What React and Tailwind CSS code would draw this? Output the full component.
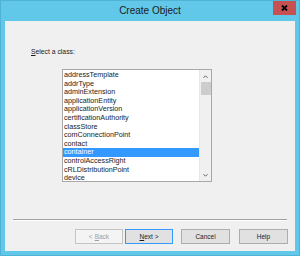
export default function App() {
  const items = [
    "addressTemplate",
    "addrType",
    "adminExtension",
    "applicationEntity",
    "applicationVersion",
    "certificationAuthority",
    "classStore",
    "comConnectionPoint",
    "contact",
    "container",
    "controlAccessRight",
    "cRLDistributionPoint",
    "device",
  ];
  const font = { fontFamily: '"Liberation Sans", Arial, sans-serif' };
  return (
    <div
      className="w-[300px] h-[256px] bg-[#62c8ea] flex flex-col border border-[#4fb3d6] overflow-hidden"
      style={font}
    >
      <div className="h-[20px] grid grid-cols-[1fr_auto_1fr] items-start">
        <div />
        <div className="text-[10px] leading-[12px] text-[#1b1b1b] mt-[4px]">Create Object</div>
        <div className="flex justify-end pr-[3px]">
          <div className="w-[23px] h-[14px] bg-[#c75050] flex items-center justify-center">
            <svg width="7" height="6" viewBox="0 0 7 6">
              <path d="M1 0.5 L6 5.5 M6 0.5 L1 5.5" stroke="#000" strokeWidth="1.8" />
            </svg>
          </div>
        </div>
      </div>
      <div className="mx-[4px] h-[230px] bg-[#f0f0f0] flex flex-col">
        <div className="ml-[26px] mt-[26px] h-[9px] text-[6.8px] leading-[9px] text-[#1b1b1b]">
          <span className="underline">S</span>elect a class:
        </div>
        <div className="ml-[57px] mt-[13px] w-[150px] h-[113px] bg-white border border-[#a8a8a8] flex overflow-hidden">
          <div className="flex-1 pt-[1px] overflow-hidden">
            {items.map((it) => (
              <div
                key={it}
                className={
                  "h-[8.6px] leading-[8.6px] text-[7.2px] pl-[1px] whitespace-nowrap " +
                  (it === "container" ? "bg-[#3399ff] text-white" : "text-[#1b1b1b]")
                }
              >
                {it}
              </div>
            ))}
          </div>
          <div className="w-[12px] bg-[#f0f0f0] border-l border-[#e6e6e6] flex flex-col items-center">
            <div className="h-[12px] flex items-center justify-center">
              <svg width="5" height="3" viewBox="0 0 5 3">
                <path d="M0.5 2.8 L2.5 0.8 L4.5 2.8" stroke="#606060" strokeWidth="1" fill="none" />
              </svg>
            </div>
            <div className="w-[10px] h-[13px] bg-[#cdcdcd]" />
            <div className="flex-1" />
            <div className="h-[12px] flex items-center justify-center">
              <svg width="5" height="3" viewBox="0 0 5 3">
                <path d="M0.5 0.2 L2.5 2.2 L4.5 0.2" stroke="#606060" strokeWidth="1" fill="none" />
              </svg>
            </div>
          </div>
        </div>
        <div className="mx-[8px] mt-[37px] border-t border-[#a0a0a0] border-b border-b-white" />
        <div className="mt-[8px] flex justify-end pr-[7px] text-[6.5px]">
          <div className="w-[48px] h-[15px] bg-[#f4f4f4] border border-[#c4c4c4] text-[#a0a0a0] flex items-center justify-center">
            &lt; <span className="underline ml-[2px]">B</span>ack
          </div>
          <div className="ml-[2px] w-[48px] h-[15px] bg-[#e1e1e1] border border-[#3399ff] text-[#1b1b1b] flex items-center justify-center">
            <span className="underline">N</span>ext &gt;
          </div>
          <div className="ml-[8px] w-[49px] h-[15px] bg-[#e1e1e1] border border-[#adadad] text-[#1b1b1b] flex items-center justify-center">
            Cancel
          </div>
          <div className="ml-[9px] w-[49px] h-[15px] bg-[#e1e1e1] border border-[#adadad] text-[#1b1b1b] flex items-center justify-center">
            Help
          </div>
        </div>
      </div>
    </div>
  );
}
